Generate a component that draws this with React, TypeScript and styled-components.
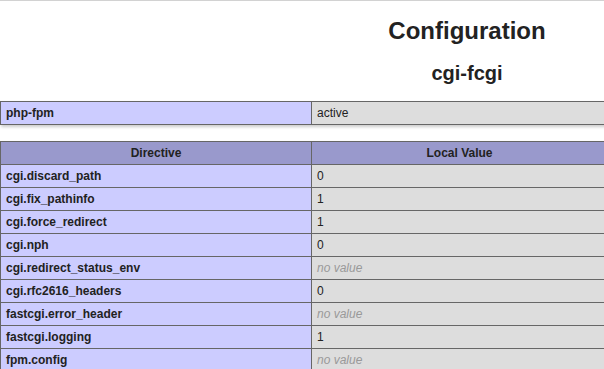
import React from "react";
import styled, { createGlobalStyle } from "styled-components";

const GlobalStyle = createGlobalStyle`
  html, body {
    margin: 0;
    padding: 0;
    background: #fff;
    overflow: hidden;
  }
  body {
    color: #222;
    font-family: "Liberation Sans", Arial, sans-serif;
  }
`;

const Page = styled.div`
  width: 934px;
`;

// bottom shadow of the table above, just peeking in at the top edge
const PrevShadow = styled.div`
  height: 1px;
  background: #d2d2d2;
`;

const Title = styled.h1`
  margin: 16px 0;
  font-size: 24px;
  line-height: 28px;
  text-align: center;
`;

const ModuleName = styled.h2`
  margin: 17px 0 16px;
  font-size: 20px;
  line-height: 23px;
  text-align: center;
`;

const Table = styled.table`
  width: 934px;
  border-collapse: collapse;
  box-shadow: 1px 2px 3px #ccc;
  margin: 0 0 16px;
  table-layout: fixed;
`;

const Cell = styled.td<{ $kind: "e" | "v" }>`
  border: 1px solid #666;
  padding: 4px 5px;
  font-size: 12px;
  line-height: 14px;
  vertical-align: baseline;
  text-align: left;
  background-color: ${(p) => (p.$kind === "e" ? "#ccf" : "#ddd")};
  font-weight: ${(p) => (p.$kind === "e" ? "bold" : "normal")};
  white-space: nowrap;
  overflow: hidden;
`;

const HeadCell = styled.th`
  border: 1px solid #666;
  padding: 4px 5px;
  font-size: 12px;
  line-height: 14px;
  background-color: #99c;
  font-weight: bold;
  text-align: center;
`;

const NoValue = styled.i`
  color: #999;
`;

type Directive = { name: string; local: string | null };

const directives: Directive[] = [
  { name: "cgi.discard_path", local: "0" },
  { name: "cgi.fix_pathinfo", local: "1" },
  { name: "cgi.force_redirect", local: "1" },
  { name: "cgi.nph", local: "0" },
  { name: "cgi.redirect_status_env", local: null },
  { name: "cgi.rfc2616_headers", local: "0" },
  { name: "fastcgi.error_header", local: null },
  { name: "fastcgi.logging", local: "1" },
  { name: "fpm.config", local: null },
];

const Value = ({ v }: { v: string | null }) =>
  v === null ? <NoValue>no value</NoValue> : <>{v}</>;

export default function App() {
  return (
    <Page>
      <GlobalStyle />
      <PrevShadow />
      <Title>Configuration</Title>
      <ModuleName>cgi-fcgi</ModuleName>

      <Table>
        <colgroup>
          <col style={{ width: 311 }} />
          <col />
        </colgroup>
        <tbody>
          <tr>
            <Cell $kind="e">php-fpm</Cell>
            <Cell $kind="v">active</Cell>
          </tr>
        </tbody>
      </Table>

      <Table>
        <colgroup>
          <col style={{ width: 311 }} />
          <col style={{ width: 296 }} />
          <col />
        </colgroup>
        <tbody>
          <tr>
            <HeadCell>Directive</HeadCell>
            <HeadCell>Local Value</HeadCell>
            <HeadCell />
          </tr>
          {directives.map((d) => (
            <tr key={d.name}>
              <Cell $kind="e">{d.name}</Cell>
              <Cell $kind="v">
                <Value v={d.local} />
              </Cell>
              <Cell $kind="v" />
            </tr>
          ))}
        </tbody>
      </Table>
    </Page>
  );
}
